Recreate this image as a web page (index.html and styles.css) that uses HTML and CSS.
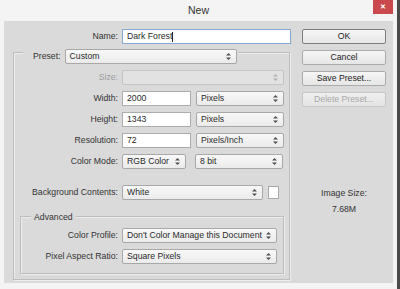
FILE: index.html
```html
<!DOCTYPE html>
<html>
<head>
<meta charset="utf-8">
<title>New</title>
<link rel="stylesheet" href="styles.css">
</head>
<body>
<div class="window">
  <div class="titlebar">
    <span></span>
    <span class="title">New</span>
    <span class="close">&#x2715;</span>
  </div>
  <div class="content">
    <div class="main">
      <div class="row name-row">
        <span class="lbl">Name:</span>
        <div class="input focus w-name">Dark Forest<span class="caret"></span></div>
      </div>
      <div class="group">
        <div class="group-head">
          <span class="head-lbl">Preset:</span>
          <div class="select w-preset"><span>Custom</span><svg class="arr" width="5" height="7" viewBox="0 0 5 7"><path d="M2.5 0L5 2.6H0z M0 4.4H5L2.5 7z"/></svg></div>
        </div>
        <div class="rows outer-rows">
          <div class="row">
            <span class="lbl disabled-text">Size:</span>
            <div class="select disabled w-full"><span></span><svg class="arr" width="5" height="7" viewBox="0 0 5 7"><path d="M2.5 0L5 2.6H0z M0 4.4H5L2.5 7z"/></svg></div>
          </div>
          <div class="row">
            <span class="lbl">Width:</span>
            <div class="input w-num">2000</div>
            <div class="select w-unit unit-gap"><span>Pixels</span><svg class="arr" width="5" height="7" viewBox="0 0 5 7"><path d="M2.5 0L5 2.6H0z M0 4.4H5L2.5 7z"/></svg></div>
          </div>
          <div class="row">
            <span class="lbl">Height:</span>
            <div class="input w-num">1343</div>
            <div class="select w-unit unit-gap"><span>Pixels</span><svg class="arr" width="5" height="7" viewBox="0 0 5 7"><path d="M2.5 0L5 2.6H0z M0 4.4H5L2.5 7z"/></svg></div>
          </div>
          <div class="row">
            <span class="lbl">Resolution:</span>
            <div class="input w-num">72</div>
            <div class="select w-unit unit-gap"><span>Pixels/Inch</span><svg class="arr" width="5" height="7" viewBox="0 0 5 7"><path d="M2.5 0L5 2.6H0z M0 4.4H5L2.5 7z"/></svg></div>
          </div>
          <div class="row">
            <span class="lbl">Color Mode:</span>
            <div class="select w-mode"><span>RGB Color</span><svg class="arr" width="5" height="7" viewBox="0 0 5 7"><path d="M2.5 0L5 2.6H0z M0 4.4H5L2.5 7z"/></svg></div>
            <div class="select w-unit mode-gap"><span>8 bit</span><svg class="arr" width="5" height="7" viewBox="0 0 5 7"><path d="M2.5 0L5 2.6H0z M0 4.4H5L2.5 7z"/></svg></div>
          </div>
          <div class="row bg-row">
            <span class="lbl">Background Contents:</span>
            <div class="select w-bg"><span>White</span><svg class="arr" width="5" height="7" viewBox="0 0 5 7"><path d="M2.5 0L5 2.6H0z M0 4.4H5L2.5 7z"/></svg></div>
            <span class="swatch"></span>
          </div>
        </div>
        <div class="advanced">
          <div class="adv-head">Advanced</div>
          <div class="rows adv-rows">
            <div class="row">
              <span class="lbl">Color Profile:</span>
              <div class="select w-adv"><span>Don't Color Manage this Document</span><svg class="arr" width="5" height="7" viewBox="0 0 5 7"><path d="M2.5 0L5 2.6H0z M0 4.4H5L2.5 7z"/></svg></div>
            </div>
            <div class="row">
              <span class="lbl">Pixel Aspect Ratio:</span>
              <div class="select w-adv"><span>Square Pixels</span><svg class="arr" width="5" height="7" viewBox="0 0 5 7"><path d="M2.5 0L5 2.6H0z M0 4.4H5L2.5 7z"/></svg></div>
            </div>
          </div>
        </div>
      </div>
    </div>
    <div class="side">
      <div class="btn default">OK</div>
      <div class="btn">Cancel</div>
      <div class="btn">Save Preset...</div>
      <div class="btn disabled-btn">Delete Preset...</div>
      <div class="image-size">
        <div>Image Size:</div>
        <div>7.68M</div>
      </div>
    </div>
  </div>
</div>
</body>
</html>
```

FILE: styles.css
```css
* { box-sizing: border-box; }
html, body { margin: 0; padding: 0; }
body {
  font-family: "Liberation Sans", Arial, sans-serif;
  font-size: 8.7px;
  color: #2a2a2a;
  background: #f4f4f4;
  width: 400px;
  height: 289px;
  overflow: hidden;
}
.window {
  width: 400px;
  height: 289px;
  display: flex;
  flex-direction: column;
  padding: 0 4px 6px 4px;
  border-right: 3px solid #4a4a4a;
  background: #f4f4f4;
}
.titlebar {
  height: 21px;
  flex: none;
  display: grid;
  grid-template-columns: 1fr auto 1fr;
}
.title {
  align-self: center;
  font-size: 10.5px;
  color: #333;
  line-height: 21px;
}
.close {
  justify-self: end;
  width: 20px;
  height: 14px;
  background: #c9494c;
  color: #fff;
  font-size: 7px;
  font-weight: bold;
  line-height: 14px;
  text-align: center;
}
.content {
  flex: 1;
  background: #dadada;
  display: grid;
  grid-template-columns: 294px 84px;
  column-gap: 4px;
  align-items: start;
}
.main { padding-top: 8px; }
.row {
  display: flex;
  align-items: center;
  height: 15px;
  gap: 4px;
}
.lbl {
  width: var(--lw);
  flex: none;
  text-align: right;
  color: #333;
  line-height: 15px;
  white-space: nowrap;
}
.name-row { --lw: 114px; }
.disabled-text { color: #9c9c9c; }
.input {
  height: 15px;
  background: #fff;
  border: 1px solid #acacac;
  padding: 0 4px;
  line-height: 13px;
  display: flex;
  align-items: center;
  white-space: nowrap;
}
.input.focus { border-color: #86a9cf; }
.caret {
  display: inline-block;
  width: 1px;
  height: 10px;
  background: #222;
}
.select {
  height: 15px;
  border: 1px solid #a8a8a8;
  border-radius: 2px;
  background: linear-gradient(#f8f8f8, #ebebeb);
  padding: 0 5px 0 4px;
  display: flex;
  align-items: center;
  justify-content: space-between;
  white-space: nowrap;
  line-height: 13px;
}
.select.disabled {
  background: #e2e2e2;
  border-color: #c4c4c4;
}
.arr { fill: #505050; flex: none; }
.select.disabled .arr { fill: #b0b0b0; }
.w-name { width: 169px; }
.w-preset { width: 172px; }
.w-full { width: 162px; }
.w-num { width: 69px; }
.w-unit { width: 88px; }
.unit-gap { margin-left: 1px; }
.w-mode { width: 64px; }
.mode-gap { margin-left: 5px; }
.w-bg { width: 141px; }
.w-adv { width: 155px; }
.swatch {
  width: 11px;
  height: 13px;
  background: #fff;
  border: 1px solid #a8a8a8;
  margin-left: 1px;
}
.group {
  width: 277px;
  margin: 8px 0 3px 9px;
  border: 1px solid #bdbdbd;
  box-shadow: 1px 1px 0 #ececec, inset 1px 1px 0 #ececec;
}
.group-head {
  display: flex;
  align-items: center;
  gap: 4px;
  width: fit-content;
  height: 15px;
  margin: -4px 0 0 9px;
  padding: 0 1px 0 10px;
  background: #dadada;
}
.head-lbl { color: #333; line-height: 15px; }
.rows {
  display: flex;
  flex-direction: column;
  gap: 6px;
}
.outer-rows { --lw: 104px; padding-top: 6px; }
.bg-row { margin-top: 10px; }
.advanced {
  width: 264px;
  margin: 16px 0 5px 6px;
  border: 1px solid #bdbdbd;
  box-shadow: 1px 1px 0 #ececec, inset 1px 1px 0 #ececec;
  padding-bottom: 9px;
}
.adv-head {
  width: fit-content;
  height: 12px;
  line-height: 12px;
  margin: -6px 0 0 10px;
  padding: 0 3px;
  background: #dadada;
  color: #333;
}
.adv-rows { --lw: 97px; padding-top: 5px; }
.side {
  padding-top: 8px;
  display: flex;
  flex-direction: column;
  gap: 6px;
}
.btn {
  height: 15px;
  border: 1px solid #ababab;
  border-radius: 2px;
  background: linear-gradient(#f6f6f6, #e6e6e6);
  text-align: center;
  line-height: 13px;
  color: #222;
}
.btn.default { border-color: #7d7d7d; }
.btn.disabled-btn { color: #a8a8a8; border-color: #c6c6c6; background: linear-gradient(#efefef, #e4e4e4); }
.image-size {
  margin-top: 72px;
  text-align: center;
  line-height: 16px;
  color: #333;
}
```
